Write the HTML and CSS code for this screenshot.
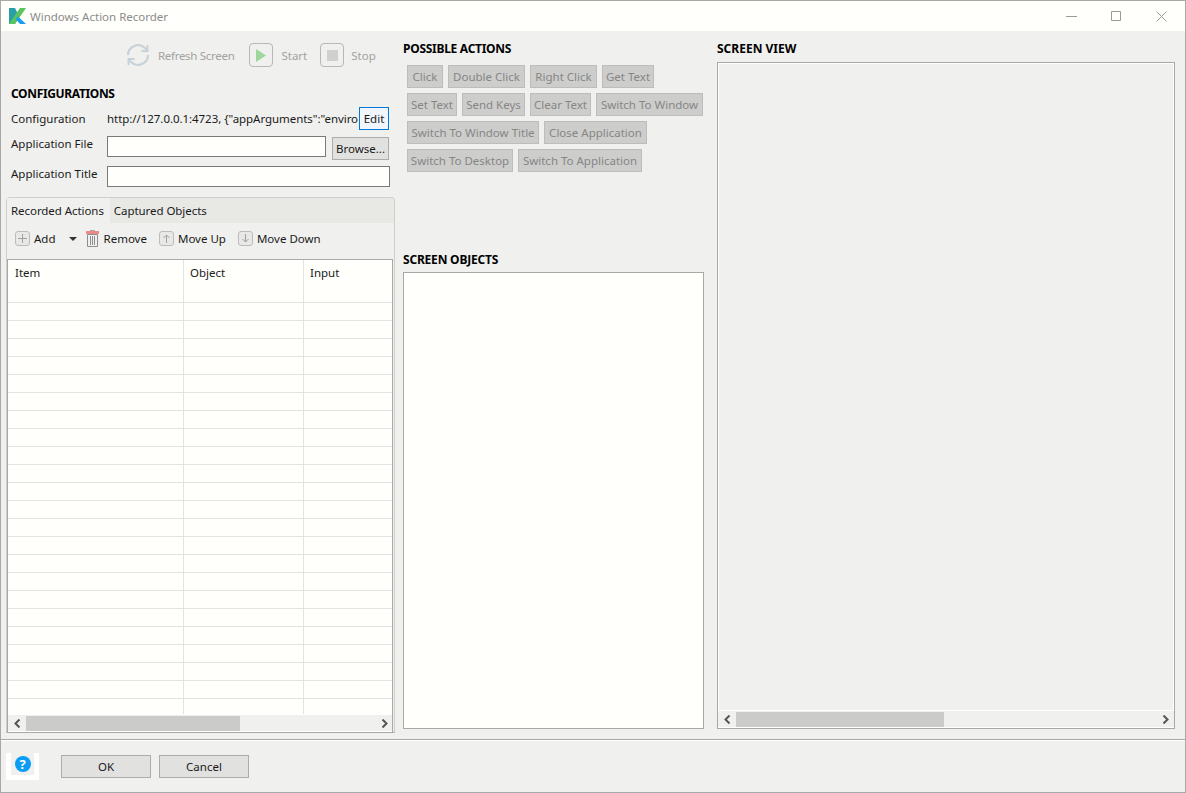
FILE: index.html
```html
<!DOCTYPE html>
<html lang="en">
<head>
<meta charset="utf-8">
<title>Windows Action Recorder</title>
<link rel="stylesheet" href="styles.css">
</head>
<body>
<div class="window">
  <header class="titlebar">
    <svg class="logo" width="17" height="17" viewBox="0 0 17 17"><path d="M0 0h6l4 8-4 8H0z" fill="#2a9fa8"/><path d="M0 16L11 0h6L6 16z" fill="#5cc45c"/><path d="M9 8.500L17 16h-6L6.500 11z" fill="#1c9cf0"/></svg>
    <span class="title">Windows Action Recorder</span>
    <div class="winctl">
      <svg width="11" height="11" viewBox="0 0 11 11"><path d="M0 5.500h11" stroke="#9a9a9a" fill="none"/></svg>
      <svg width="11" height="11" viewBox="0 0 11 11"><path d="M.5.5h9v9h-9z" stroke="#9a9a9a" fill="none"/></svg>
      <svg width="11" height="11" viewBox="0 0 11 11"><path d="M.5.5l10 10M10.500.5l-10 10" stroke="#9a9a9a" fill="none"/></svg>
    </div>
  </header>
  <main class="content">
    <section class="left">
      <div class="toolbar">
        <span class="tool tool-refresh">
          <svg class="i-refresh" width="24" height="24" viewBox="0 0 24 24" fill="none" stroke="#c6d1d8" stroke-width="2.200"><path d="M2 12a10 10 0 0 1 17-7l1.500 1.500"/><path d="M22 12a10 10 0 0 1-17 7l-1.500-1.500"/><path d="M21.500 2v6h-6M2.500 22v-6h6" stroke-width="1.800"/></svg>
          <span>Refresh Screen</span>
        </span>
        <span class="tool tool-start">
          <span class="tbtn"><svg width="10" height="13" viewBox="0 0 10 13"><path d="M0 0l10 6.500L0 13z" fill="#9ed69e"/></svg></span>
          <span>Start</span>
        </span>
        <span class="tool">
          <span class="tbtn tbtn-stop"><svg width="11" height="11" viewBox="0 0 11 11"><rect width="11" height="11" fill="#d0d0ce"/></svg></span>
          <span>Stop</span>
        </span>
      </div>
      <h2 class="heading h-config">CONFIGURATIONS</h2>
      <div class="row row-config">
        <span class="lbl">Configuration</span>
        <span class="cfg">http://127.0.0.1:4723, {"appArguments":"enviro</span>
        <button class="btn btn-edit">Edit</button>
      </div>
      <div class="row row-file">
        <span class="lbl lbl-up">Application File</span>
        <span class="field field-file"></span>
        <button class="btn btn-browse">Browse...</button>
      </div>
      <div class="row row-title">
        <span class="lbl lbl-up">Application Title</span>
        <span class="field field-title"></span>
      </div>
      <div class="tabs">
        <div class="tabbar">
          <span class="tab active">Recorded Actions</span>
          <span class="tab">Captured Objects</span>
        </div>
        <div class="actions">
          <span class="act act-add">
            <span class="sq"><svg width="9" height="9" viewBox="0 0 9 9"><path d="M4.500 0v9M0 4.500h9" stroke="#a0a0a0" fill="none"/></svg></span>Add
          </span>
          <svg class="caret" width="8" height="4" viewBox="0 0 8 4"><path d="M0 0h8L4 4z" fill="#333"/></svg>
          <span class="act act-remove">
            <svg width="13" height="17" viewBox="0 0 13 17"><path d="M4 .5h5" stroke="#a8a8a8" fill="none"/><rect y="1" width="13" height="3" fill="#e98a86"/><path d="M1.500 4.500h10v12h-10zM4.500 6v9M6.500 6v9M8.500 6v9" stroke="#8e8e8e" fill="none"/></svg>Remove
          </span>
          <span class="act act-up">
            <span class="sq"><svg width="9" height="9" viewBox="0 0 9 9"><path d="M4.500 9V1M1.500 4l3-3 3 3" stroke="#a0a0a0" fill="none"/></svg></span>Move Up
          </span>
          <span class="act">
            <span class="sq"><svg width="9" height="9" viewBox="0 0 9 9"><path d="M4.500 0v8M1.500 5l3 3 3-3" stroke="#a0a0a0" fill="none"/></svg></span>Move Down
          </span>
        </div>
        <div class="tablebox">
          <div class="thead"><span class="c1">Item</span><span class="c2">Object</span><span class="c3">Input</span></div>
          <div class="tbody">
            <div class="tr"><i class="c1"></i><i class="c2"></i><i class="c3"></i></div><div class="tr"><i class="c1"></i><i class="c2"></i><i class="c3"></i></div><div class="tr"><i class="c1"></i><i class="c2"></i><i class="c3"></i></div><div class="tr"><i class="c1"></i><i class="c2"></i><i class="c3"></i></div><div class="tr"><i class="c1"></i><i class="c2"></i><i class="c3"></i></div><div class="tr"><i class="c1"></i><i class="c2"></i><i class="c3"></i></div><div class="tr"><i class="c1"></i><i class="c2"></i><i class="c3"></i></div><div class="tr"><i class="c1"></i><i class="c2"></i><i class="c3"></i></div><div class="tr"><i class="c1"></i><i class="c2"></i><i class="c3"></i></div><div class="tr"><i class="c1"></i><i class="c2"></i><i class="c3"></i></div><div class="tr"><i class="c1"></i><i class="c2"></i><i class="c3"></i></div><div class="tr"><i class="c1"></i><i class="c2"></i><i class="c3"></i></div><div class="tr"><i class="c1"></i><i class="c2"></i><i class="c3"></i></div><div class="tr"><i class="c1"></i><i class="c2"></i><i class="c3"></i></div><div class="tr"><i class="c1"></i><i class="c2"></i><i class="c3"></i></div><div class="tr"><i class="c1"></i><i class="c2"></i><i class="c3"></i></div><div class="tr"><i class="c1"></i><i class="c2"></i><i class="c3"></i></div><div class="tr"><i class="c1"></i><i class="c2"></i><i class="c3"></i></div><div class="tr"><i class="c1"></i><i class="c2"></i><i class="c3"></i></div><div class="tr"><i class="c1"></i><i class="c2"></i><i class="c3"></i></div><div class="tr"><i class="c1"></i><i class="c2"></i><i class="c3"></i></div><div class="tr"><i class="c1"></i><i class="c2"></i><i class="c3"></i></div><div class="tr"><i class="c1"></i><i class="c2"></i><i class="c3"></i></div>
          </div>
          <div class="hscroll scroll-table">
            <svg width="7" height="9" viewBox="0 0 7 9"><path d="M5.500 .5L1.500 4.500l4 4" stroke="#555" stroke-width="2" fill="none"/></svg>
            <span class="track"><span class="thumb"></span></span>
            <svg width="7" height="9" viewBox="0 0 7 9"><path d="M1.500 .5l4 4-4 4" stroke="#555" stroke-width="2" fill="none"/></svg>
          </div>
        </div>
      </div>
    </section>
    <section class="middle">
      <h2 class="heading h-possible">POSSIBLE ACTIONS</h2>
      <div class="possible">
        <div class="arow"><button class="abtn w36">Click</button><button class="abtn w77">Double Click</button><button class="abtn w67">Right Click</button><button class="abtn w52">Get Text</button></div>
        <div class="arow"><button class="abtn w50">Set Text</button><button class="abtn w63">Send Keys</button><button class="abtn w61">Clear Text</button><button class="abtn w107">Switch To Window</button></div>
        <div class="arow"><button class="abtn w132">Switch To Window Title</button><button class="abtn w103">Close Application</button></div>
        <div class="arow"><button class="abtn w106">Switch To Desktop</button><button class="abtn w124">Switch To Application</button></div>
      </div>
      <h2 class="heading h-objects">SCREEN OBJECTS</h2>
      <div class="objects"></div>
    </section>
    <section class="right">
      <h2 class="heading">SCREEN VIEW</h2>
      <div class="view">
        <div class="view-fill"></div>
        <div class="hscroll scroll-view">
          <svg width="7" height="9" viewBox="0 0 7 9"><path d="M5.500 .5L1.500 4.500l4 4" stroke="#555" stroke-width="2" fill="none"/></svg>
          <span class="track"><span class="thumb"></span></span>
          <svg width="7" height="9" viewBox="0 0 7 9"><path d="M1.500 .5l4 4-4 4" stroke="#555" stroke-width="2" fill="none"/></svg>
        </div>
      </div>
    </section>
  </main>
  <footer class="footer">
    <span class="help"><span class="helpdot">?</span></span>
    <button class="btn btn-foot">OK</button>
    <button class="btn btn-foot">Cancel</button>
  </footer>
</div>
</body>
</html>
```
FILE: styles.css
```css
* { box-sizing: border-box; }
html, body { margin: 0; padding: 0; }
body { width: 1186px; height: 793px; overflow: hidden; background: #fff; font-family: "Noto Sans", "Open Sans", sans-serif; font-size: 11.5px; color: #1a1a1a; }
button { font: inherit; color: inherit; margin: 0; padding: 0; }
.window { width: 1186px; height: 793px; display: flex; flex-direction: column; background: #f0f0ee; border: 1px solid #a8a8a8; }
.titlebar { height: 30px; flex: none; background: #fffffb; display: flex; align-items: center; padding-left: 8px; color: #8b8b8b; }
.logo { flex: none; margin-right: 4px; }
.winctl { margin-left: auto; display: flex; gap: 34px; padding-right: 18px; align-items: center; }
.content { flex: 1; display: flex; min-height: 0; }
.left { width: 402px; flex: none; padding-left: 5px; display: flex; flex-direction: column; }
.toolbar { height: 32px; margin-top: 8px; display: flex; align-items: center; padding-left: 120px; }
.tool { display: inline-flex; align-items: center; color: #a2a2a2; margin-right: 13px; white-space: nowrap; }
.tool-refresh { margin-right: 15px; letter-spacing: -0.3px; }
.i-refresh { margin-right: 8px; }
.tbtn { width: 24px; height: 24px; border: 1px solid #b8b8b8; border-radius: 4px; display: inline-flex; align-items: center; justify-content: center; margin-right: 8px; }
.tbtn-stop { margin-right: 7px; }
.heading { margin: 0; font-size: 12px; font-weight: 700; color: #000; line-height: 16px; white-space: nowrap; }
.h-config { margin: 15px 0 0 5px; letter-spacing: -0.35px; }
.h-possible { letter-spacing: -0.28px; }
.h-objects { letter-spacing: -0.2px; }
.row { display: flex; align-items: center; padding-left: 5px; }
.lbl { width: 96px; flex: none; white-space: nowrap; }
.lbl-up { position: relative; top: -3px; }
.row-config { margin-top: 4px; height: 24px; }
.cfg { width: 252px; white-space: nowrap; overflow: hidden; flex: none; letter-spacing: -0.05px; }
.btn { border: 1px solid #adadad; background: #e1e1df; height: 24px; white-space: nowrap; }
.btn-edit { width: 30px; height: 23px; border: 1px solid #0078d7; background: #f0f6fb; }
.row-file { margin-top: 4px; height: 24px; }
.field { display: block; height: 21px; background: #fffffb; border: 1px solid #7a7a7a; flex: none; }
.field-file { width: 219px; }
.btn-browse { width: 57px; margin-left: 6px; height: 23px; margin-top: 4px; }
.row-title { margin-top: 6px; height: 24px; }
.field-title { width: 283px; }
.tabs { margin-top: 9px; width: 389px; height: 536px; border: 1px solid #cfcfcd; border-radius: 4px 4px 0 0; border-bottom-color: #a8a8a8; display: flex; flex-direction: column; }
.tabbar { height: 25px; flex: none; background: #e8e8e5; display: flex; border-radius: 4px 4px 0 0; }
.tab { padding: 0 5px 0 4px; line-height: 25px; letter-spacing: -0.06px; }
.active { background: #f0f0ee; padding-right: 6px; }
.actions { height: 36px; flex: none; display: flex; align-items: center; padding: 0 0 5px 8px; }
.act { display: inline-flex; align-items: center; gap: 4px; margin-right: 12px; }
.act-add { margin-right: 13px; }
.caret { margin-right: 9px; }
.act-remove { gap: 5px; }
.sq { width: 15px; height: 15px; border: 1px solid #bcbcbc; border-radius: 3px; background: #e8e8e6; display: inline-flex; align-items: center; justify-content: center; }
.tablebox { flex: 1; min-height: 0; margin-right: 1px; background: #fffffb; border-top: 1px solid #a8a8a8; border-left: 1px solid #a8a8a8; border-right: 1px solid #a8a8a8; display: flex; flex-direction: column; }
.thead, .tr { display: flex; border-bottom: 1px solid #e3e3e1; flex: none; }
.thead { height: 43px; line-height: 25px; }
.tr { height: 18px; }
.c1, .c2, .c3 { display: block; border-right: 1px solid #e3e3e1; height: 100%; padding-left: 6px; }
.c1 { width: 176px; padding-left: 7px; }
.c2 { width: 120px; }
.c3 { flex: 1; border-right: 0; }
.tbody { flex: 1; min-height: 0; overflow: hidden; }
.hscroll { flex: none; height: 18px; display: flex; align-items: center; background: #f0f0ee; padding: 0 4px 0 6px; border-top: 1px solid #fff; border-bottom: 1px solid #fff; }
.track { flex: 1; height: 15px; margin: 0 4px 0 5px; display: block; }
.thumb { display: block; height: 15px; background: #cbcbc9; }
.scroll-table .thumb { width: 214px; }
.scroll-view .thumb { width: 208px; }
.middle { width: 314px; flex: none; padding-top: 10px; }
.possible { margin: 8px 0 0 4px; height: 187px; }
.arow { display: flex; gap: 5px; margin-bottom: 5px; }
.abtn { height: 23px; border: 1px solid #bdbdbb; background: #cdcdcb; color: #868686; white-space: nowrap; text-align: center; }
.w36 { width: 36px; } .w50 { width: 50px; } .w52 { width: 52px; } .w61 { width: 61px; } .w63 { width: 63px; } .w67 { width: 67px; } .w77 { width: 77px; } .w103 { width: 103px; } .w106 { width: 106px; } .w107 { width: 107px; } .w124 { width: 124px; } .w132 { width: 132px; }
.objects { width: 301px; height: 457px; margin-top: 4px; background: #fffffb; border: 1px solid #a8a8a8; }
.right { width: 458px; flex: none; padding-top: 10px; }
.view { margin-top: 5px; width: 458px; height: 667px; border: 1px solid #a8a8a8; box-shadow: inset 0 0 0 1px #fff; padding: 1px; display: flex; flex-direction: column; }
.view-fill { flex: 1; }
.scroll-view { margin: 0 -1px -1px; padding: 0 5px 0 6px; }
.footer { height: 53px; flex: none; margin-top: 5px; border-top: 1px solid #a8a8a8; box-shadow: inset 0 1px 0 #fff; display: flex; align-items: center; padding-left: 60px; gap: 8px; position: relative; }
.help { position: absolute; left: 5px; top: 13px; width: 33px; height: 27px; border-style: solid; border-color: #fff; border-width: 0 5px 5px; display: flex; align-items: center; justify-content: center; }
.helpdot { display: block; width: 16px; height: 16px; border-radius: 50%; background: #0b9cf5; color: #fff; font-size: 13px; font-weight: 700; line-height: 16px; text-align: center; }
.btn-foot { width: 90px; height: 23px; }
```
